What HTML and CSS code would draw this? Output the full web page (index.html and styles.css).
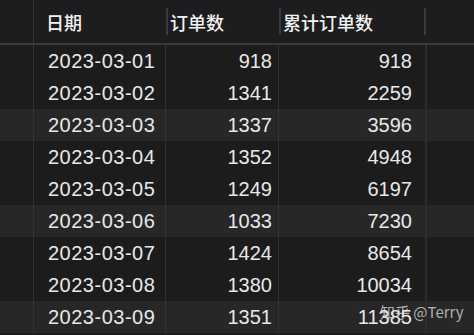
FILE: index.html
```html
<!DOCTYPE html>
<html>
<head>
<meta charset="utf-8">
<link rel="stylesheet" href="styles.css">
</head>
<body>
<div class="grid">
  <div class="row head">
    <div class="c c0"></div>
    <div class="c c1"><span class="ht">日期</span></div>
    <div class="c c2"><span class="sep"></span><span class="ht">订单数</span></div>
    <div class="c c3"><span class="sep"></span><span class="ht">累计订单数</span></div>
    <div class="c c4"><span class="sep"></span></div>
  </div>
  <div class="row"><div class="c c0"></div><div class="c c1">2023-03-01</div><div class="c c2 num">918</div><div class="c c3 num">918</div><div class="c c4"></div></div>
  <div class="row"><div class="c c0"></div><div class="c c1">2023-03-02</div><div class="c c2 num">1341</div><div class="c c3 num">2259</div><div class="c c4"></div></div>
  <div class="row alt"><div class="c c0"></div><div class="c c1">2023-03-03</div><div class="c c2 num">1337</div><div class="c c3 num">3596</div><div class="c c4"></div></div>
  <div class="row"><div class="c c0"></div><div class="c c1">2023-03-04</div><div class="c c2 num">1352</div><div class="c c3 num">4948</div><div class="c c4"></div></div>
  <div class="row"><div class="c c0"></div><div class="c c1">2023-03-05</div><div class="c c2 num">1249</div><div class="c c3 num">6197</div><div class="c c4"></div></div>
  <div class="row alt"><div class="c c0"></div><div class="c c1">2023-03-06</div><div class="c c2 num">1033</div><div class="c c3 num">7230</div><div class="c c4"></div></div>
  <div class="row"><div class="c c0"></div><div class="c c1">2023-03-07</div><div class="c c2 num">1424</div><div class="c c3 num">8654</div><div class="c c4"></div></div>
  <div class="row"><div class="c c0"></div><div class="c c1">2023-03-08</div><div class="c c2 num">1380</div><div class="c c3 num">10034</div><div class="c c4"></div></div>
  <div class="row alt"><div class="c c0"></div><div class="c c1">2023-03-09</div><div class="c c2 num">1351</div><div class="c c3 num">11385</div><div class="c c4"></div></div>
</div>
<div class="wm">知乎 @Terry</div>
</body>
</html>
```
FILE: styles.css
```css
html, body {
  margin: 0;
  padding: 0;
  background: #1c1c1c;
  width: 474px;
  height: 335px;
  overflow: hidden;
}
body {
  position: relative;
  font-family: "Liberation Sans", "Noto Sans CJK SC", sans-serif;
  color: #e8e8e8;
}
.grid {
  display: flex;
  flex-direction: column;
}
.row {
  display: flex;
  flex: none;
  height: 32px;
  background: #1c1c1c;
}
.row.alt {
  background: #272727;
}
.row.head {
  height: 43px;
  background: #1d1d1f;
  border-bottom: 2px solid #3a3a3c;
}
.c {
  box-sizing: border-box;
  display: flex;
  align-items: center;
  font-size: 20px;
  white-space: nowrap;
}
.c0 { width: 34px; border-right: 1px solid #333335; }
.c1 { width: 131px; padding-left: 14px; letter-spacing: 0.5px; }
.c2 { width: 113px; border-left: 1px solid #333335; }
.c3 { width: 147px; border-left: 1px solid #333335; }
.c4 { flex: 1; border-left: 2px solid #2d2d2d; }
.num { justify-content: flex-end; }
.c2.num { padding-right: 6px; }
.c3.num { padding-right: 13px; }
.head .c { border-left: none; position: relative; }
.head .c0 { border-right: 1px solid #333335; }
.head .c2, .head .c3 { padding-left: 3px; }
.head .c1 { padding-left: 12px; letter-spacing: 0; }
.sep {
  width: 2px;
  height: 27px;
  background: #3a3a3c;
  margin-right: 2px;
  margin-left: -2px;
}
.head .c4 .sep { margin-left: -1px; }
.ht {
  font-family: "Noto Sans CJK SC", sans-serif;
  font-weight: 500;
  font-size: 18px;
  color: #f2f2f2;
}
.wm {
  position: absolute;
  left: 380px;
  top: 301px;
  font-family: "Noto Sans CJK SC", sans-serif;
  font-size: 15px;
  color: rgba(230, 230, 230, 0.72);
}
```
